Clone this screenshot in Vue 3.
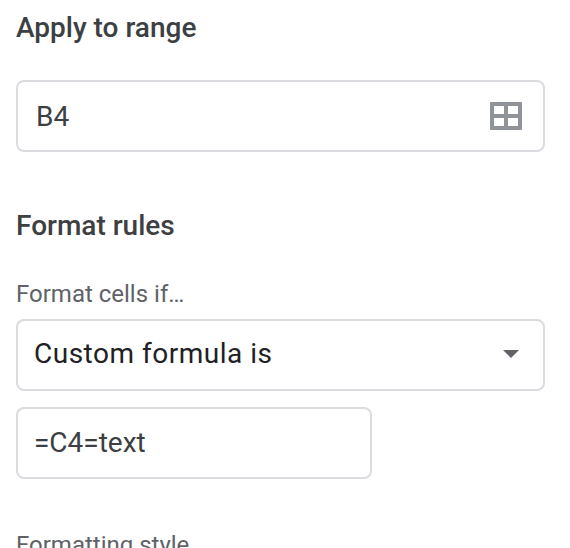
<template>
  <div class="panel">
    <h3 class="heading first">Apply to range</h3>
    <div class="field range">
      <span>B4</span>
      <svg class="grid-icon" viewBox="0 0 32 28">
        <path fill-rule="evenodd" d="M1 0h30a1 1 0 0 1 1 1v26a1 1 0 0 1-1 1H1a1 1 0 0 1-1-1V1a1 1 0 0 1 1-1zM4 4v8h10V4zM18 4v8h10V4zM4 16v8h10v-8zM18 16v8h10v-8z"/>
      </svg>
    </div>

    <h3 class="heading rules">Format rules</h3>
    <div class="label">Format cells if…</div>
    <div class="field select">
      <span>{{ condition }}</span>
      <i class="arrow"></i>
    </div>
    <div class="field formula">{{ formula }}</div>
    <div class="label style">Formatting style</div>
  </div>
</template>

<script setup>
const condition = 'Custom formula is'
const formula = '=C4=text'
</script>

<style>
html, body {
  background: #fff;
  overflow: hidden;
}
</style>

<style scoped>
.panel {
  height: 548px;
  overflow: hidden;
  padding-left: 16px;
  box-sizing: border-box;
  font-family: Roboto, "Liberation Sans", sans-serif;
  color: #3c4043;
}

.heading {
  margin: 0;
  font-size: 28px;
  line-height: 32px;
  font-weight: 500;
}

.first {
  padding-top: 12px;
}

.field {
  box-sizing: border-box;
  display: flex;
  align-items: center;
  height: 72px;
  border: 2px solid #dadce0;
  border-radius: 8px;
  background: #fff;
  font-size: 28px;
}

.range {
  width: 529px;
  margin-top: 36px;
  padding: 0 21px 0 18px;
  justify-content: space-between;
}

.grid-icon {
  width: 32px;
  height: 28px;
  fill: #909397;
}

.rules {
  margin-top: 58px;
}

.label {
  font-size: 24px;
  line-height: 28px;
  color: #5f6368;
}

.rules + .label {
  margin-top: 38px;
}

.select {
  width: 529px;
  margin-top: 11px;
  padding: 0 24px 4px 16px;
  justify-content: space-between;
  letter-spacing: 0.5px;
  color: #202124;
}

.arrow {
  width: 0;
  height: 0;
  margin-top: 2px;
  border-left: 8px solid transparent;
  border-right: 8px solid transparent;
  border-top: 8px solid #5f6368;
}

.formula {
  width: 356px;
  margin-top: 16px;
  padding: 0 0 2px 16px;
}

.style {
  margin-top: 52px;
}
</style>
